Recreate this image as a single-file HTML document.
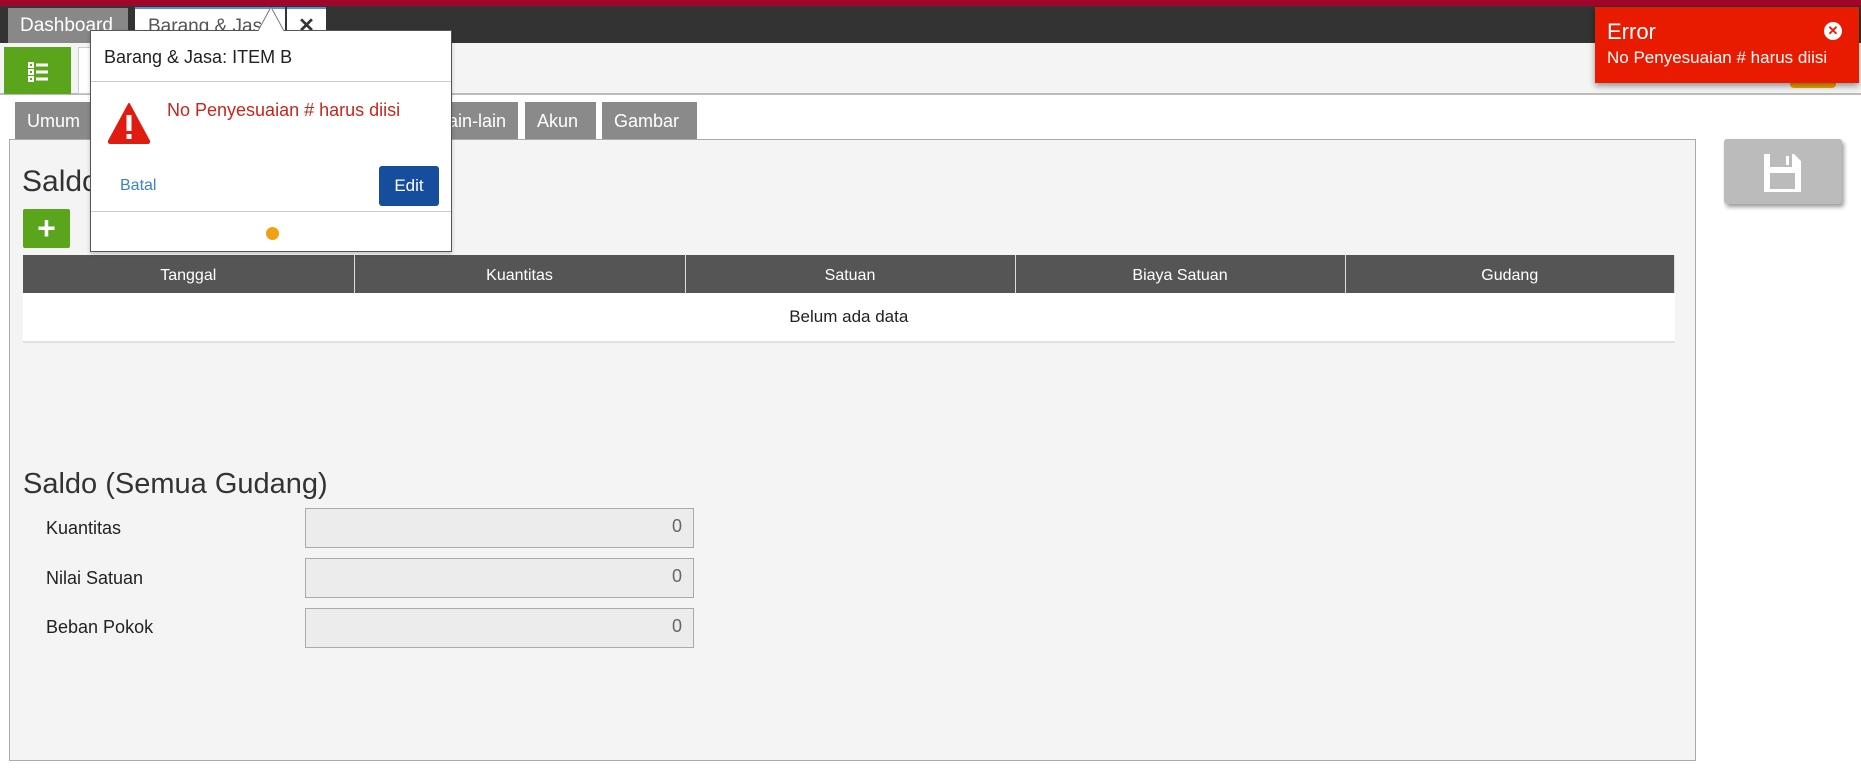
<!DOCTYPE html>
<html><head><meta charset="utf-8"><style>
*{box-sizing:border-box;margin:0;padding:0}
body{width:1861px;height:778px;position:relative;overflow:hidden;background:#fff;font-family:"Liberation Sans",sans-serif;color:#222}
.a{position:absolute}
.tab{position:absolute;top:102px;height:37px;background:#8a8a8a;color:#fff;font-size:18px;line-height:39px;padding:0 12px;white-space:nowrap;overflow:hidden}
th{background:#555;color:#fff;font-weight:normal;font-size:16px;height:38px;border-right:1px solid #ddd;padding-top:4px}
.lbl{position:absolute;left:46px;font-size:18px;color:#222}
.inp{position:absolute;left:305px;width:389px;height:40px;background:#ececec;border:1px solid #aaa;text-align:right;padding-right:11px;font-size:18px;line-height:34px;color:#666}
</style></head><body>
<div class="a" style="left:0;top:0;width:1861px;height:6px;background:#a0062a"></div>
<div class="a" style="left:0;top:6px;width:1861px;height:37px;background:#333"></div>
<div class="a" style="left:8px;top:8px;width:120px;height:35px;background:#888;color:#fff;font-size:19px;line-height:36px;padding-left:12px">Dashboard</div>
<div class="a" style="left:135px;top:7px;width:150px;height:36px;background:#fff;border-top:2px solid #5b8fd0;color:#555;font-size:19px;line-height:36px;padding-left:13px;overflow:hidden">Barang &amp; Jasa</div>
<div class="a" style="left:287px;top:7px;width:39px;height:36px;background:#fff;border-top:2px solid #5b8fd0;font-size:20px;line-height:34px;text-align:center;font-weight:bold;color:#333">✕</div>
<div class="a" style="left:0;top:43px;width:1861px;height:52px;background:#f4f4f4;border-bottom:2px solid #bbb"></div>
<div class="a" style="left:4px;top:47px;width:67px;height:47px;background:#5aa51c">
<svg width="67" height="47"><g fill="none" stroke="#fff" stroke-width="2"><rect x="25" y="16" width="4" height="4"/><rect x="25" y="23" width="4" height="4"/><rect x="25" y="30" width="4" height="4"/></g><g stroke="#fff" stroke-width="3"><line x1="32" y1="18" x2="44" y2="18"/><line x1="32" y1="25" x2="44" y2="25"/><line x1="32" y1="32" x2="44" y2="32"/></g></svg></div>
<div class="a" style="left:78px;top:47px;width:20px;height:47px;background:#fff;border:1px solid #ccc"></div>
<div class="a" style="left:1790px;top:80px;width:46px;height:8px;background:#f0a500;border-radius:0 0 4px 4px"></div>
<div class="tab" style="left:15px">Umum</div>
<div class="tab" style="left:430px;width:88px;direction:rtl;text-align:left">Lain-lain</div>
<div class="tab" style="left:525px;width:71px">Akun</div>
<div class="tab" style="left:602px;width:95px">Gambar</div>
<div class="a" style="left:9px;top:139px;width:1687px;height:622px;background:#f4f4f4;border:1px solid #aaa"></div>
<div class="a" style="left:22px;top:165px;font-size:30px;color:#333">Saldo</div>
<div class="a" style="left:23px;top:209px;width:47px;height:39px;background:#5aa51c;border-radius:2px;color:#fff;text-align:center;font-size:32px;line-height:38px;font-weight:bold">+</div>
<table class="a" style="left:23px;top:255px;width:1652px;border-collapse:collapse">
<tr><th style="width:331px">Tanggal</th><th style="width:331px">Kuantitas</th><th style="width:330px">Satuan</th><th style="width:330px">Biaya Satuan</th><th>Gudang</th></tr>
<tr><td colspan="5" style="background:#fff;height:49px;text-align:center;font-size:17px;border-bottom:2px solid #e2e2e2">Belum ada data</td></tr></table>
<div class="a" style="left:23px;top:468px;font-size:29px;color:#333">Saldo (Semua Gudang)</div>
<div class="lbl" style="top:518px">Kuantitas</div><div class="inp" style="top:508px">0</div>
<div class="lbl" style="top:568px">Nilai Satuan</div><div class="inp" style="top:558px">0</div>
<div class="lbl" style="top:617px">Beban Pokok</div><div class="inp" style="top:608px">0</div>
<div class="a" style="left:1724px;top:139px;width:118px;height:65px;background:#bbb;border-radius:3px;box-shadow:2px 3px 4px rgba(0,0,0,.4)">
<svg width="118" height="65"><path d="M40 15H70L77 22V53H40Z" fill="#fff"/><rect x="46" y="15" width="22" height="13" fill="#bbb"/><rect x="62" y="17" width="3" height="9" fill="#fff"/><rect x="46" y="34" width="25" height="16" fill="#bbb"/></svg></div>
<div class="a" style="left:1595px;top:7px;width:264px;height:76px;background:#e81a00;box-shadow:0 3px 6px rgba(0,0,0,.4);color:#fff">
<div class="a" style="left:12px;top:12px;font-size:22px">Error</div>
<div class="a" style="left:12px;top:41px;font-size:17px">No Penyesuaian # harus diisi</div>
<div class="a" style="left:229px;top:15px;width:18px;height:18px;border-radius:50%;background:#fff;color:#e81a00;font-size:13px;line-height:18px;text-align:center;font-weight:bold">✕</div></div>
<div class="a" style="left:90px;top:30px;width:362px;height:222px;background:#fff;border:1px solid #555;box-shadow:0 2px 4px rgba(0,0,0,.2)">
<div class="a" style="left:13px;top:16px;font-size:18px;color:#222">Barang &amp; Jasa: ITEM B</div>
<div class="a" style="left:0;top:50px;width:360px;height:1px;background:#ccc"></div>
<svg class="a" style="left:17px;top:71px" width="42" height="42"><path d="M21 2L1 39Q0 41 3 41H39Q42 41 41 39Z" fill="#e01b10" stroke="#e01b10" stroke-linejoin="round" stroke-width="2"/><rect x="18.5" y="13" width="5" height="16" fill="#fff"/><rect x="18.5" y="32" width="5" height="5" fill="#fff"/></svg>
<div class="a" style="left:76px;top:69px;font-size:18px;color:#c8261c">No Penyesuaian # harus diisi</div>
<div class="a" style="left:29px;top:146px;font-size:16px;color:#3d82c4">Batal</div>
<div class="a" style="left:288px;top:135px;width:60px;height:40px;background:#164d9c;border-radius:3px;color:#fff;font-size:17px;line-height:40px;text-align:center">Edit</div>
<div class="a" style="left:0;top:180px;width:360px;height:1px;background:#ccc"></div>
<div class="a" style="left:175px;top:196px;width:13px;height:13px;border-radius:50%;background:#f0a010"></div>
</div>
<svg class="a" style="left:258px;top:7px" width="26" height="24"><path d="M0 24L13 0L26 24" fill="#fff" stroke="#777"/></svg>
</body></html>
